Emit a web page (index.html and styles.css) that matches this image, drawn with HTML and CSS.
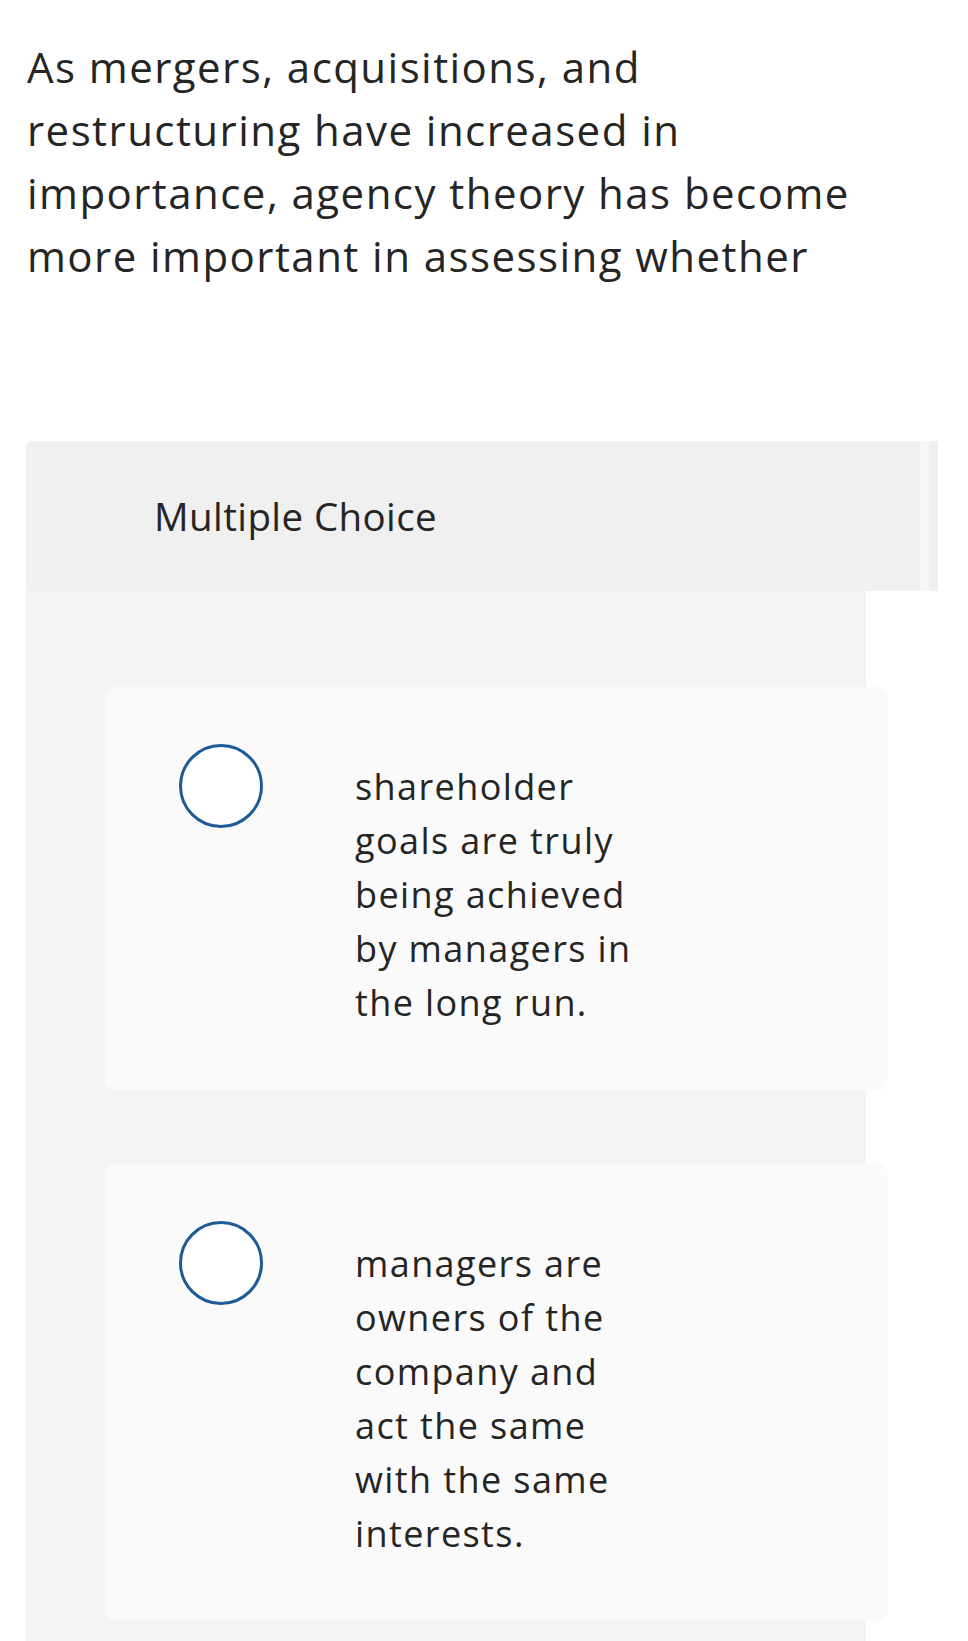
FILE: index.html
```html
<!DOCTYPE html>
<html lang="en">
<head>
<meta charset="utf-8">
<title>Multiple Choice</title>
<link rel="stylesheet" href="styles.css">
</head>
<body>
<main class="page">
  <p class="prompt">As mergers, acquisitions, and restructuring have increased in importance, agency theory has become more important in assessing whether</p>
  <section class="mc">
    <div class="mc-head"><span class="mc-title">Multiple Choice</span></div>
    <div class="mc-body">
      <div class="option">
        <span class="radio"></span>
        <p class="option-text">shareholder goals are truly being achieved by managers in the long run.</p>
      </div>
      <div class="option">
        <span class="radio"></span>
        <p class="option-text">managers are owners of the company and act the same with the same interests.</p>
      </div>
    </div>
  </section>
</main>
</body>
</html>
```
FILE: styles.css
```css
html, body {
  margin: 0;
  padding: 0;
  background: #ffffff;
}
body {
  font-family: "Open Sans", "Lato", sans-serif;
  color: #252525;
}
.page {
  display: flex;
  flex-direction: column;
}
.prompt {
  margin: 0;
  padding: 35px 0 0 27px;
  width: 862px;
  font-size: 42px;
  line-height: 63px;
  letter-spacing: 1.45px;
}
.mc {
  margin: 154px 0 0 26px;
  display: flex;
  flex-direction: column;
}
.mc-head {
  width: 912px;
  height: 150px;
  box-sizing: border-box;
  border-radius: 5px 0 0 0;
  display: flex;
  align-items: center;
  padding-left: 128px;
  background: linear-gradient(to right, #f0f0f0 0, #f0f0f0 894px, #f6f6f6 894px, #f6f6f6 903px, #efefef 903px);
}
.mc-title {
  font-size: 38.5px;
  letter-spacing: 0.4px;
}
.mc-body {
  width: 840px;
  box-sizing: border-box;
  background: #f4f4f4;
  padding: 96px 0 40px 79px;
  display: flex;
  flex-direction: column;
  gap: 74px;
}
.option {
  width: 783px;
  box-sizing: border-box;
  background: #fafafa;
  border-radius: 10px;
  padding: 57px 57px 60px 74px;
  display: flex;
  align-items: flex-start;
}
.radio {
  flex: none;
  width: 84px;
  height: 84px;
  box-sizing: border-box;
  border: 3px solid #1d5a96;
  border-radius: 50%;
  background: #ffffff;
}
.option-text {
  margin: 16px 0 0 92px;
  width: 295px;
  font-size: 36px;
  line-height: 54px;
  letter-spacing: 1.4px;
}
```
